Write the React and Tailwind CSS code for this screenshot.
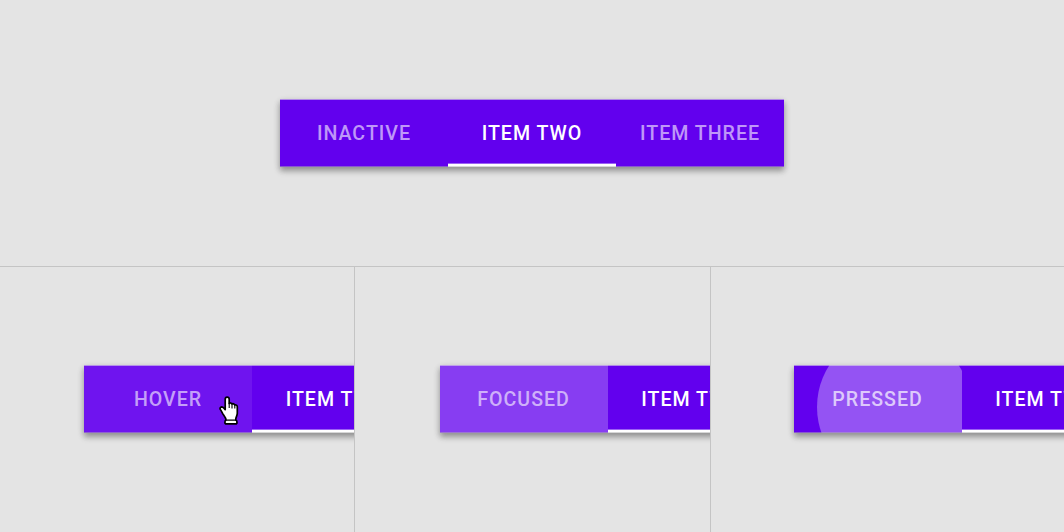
import React from "react";

const Tab = ({ label, active, overlay = "", tone = "text-white/60", children }) => (
  <div
    className={`relative flex h-[68px] w-[168px] shrink-0 items-center justify-center overflow-hidden pt-0.5 ${overlay}`}
  >
    {children}
    <span
      className={`relative text-[19.6px] leading-none font-medium tracking-[1px] whitespace-nowrap ${
        active ? "text-white" : tone
      }`}
    >
      {label}
    </span>
    {active && (
      <span className="absolute inset-x-0 bottom-0 h-1 border-t border-[#9c62f4] bg-white" />
    )}
  </div>
);

const TabBar = ({ children }) => (
  <div className="relative flex h-[68px] w-[504px] shrink-0 bg-[#6200ee] shadow-[0_4px_6px_rgba(0,0,0,0.3),0_2px_7px_rgba(0,0,0,0.12)]">
    {children}
    {/* soft top and bottom edges */}
    <span className="absolute inset-x-0 top-0 h-px bg-[#e4e4e4]/60" />
    <span className="absolute inset-x-0 bottom-0 h-px bg-[#b0b0b0]/50" />
  </div>
);

const HandCursor = () => (
  <svg
    className="absolute top-[31px] left-[135px]"
    width="22"
    height="31"
    viewBox="0 0 22 30"
    preserveAspectRatio="none"
    fill="none"
  >
    <path
      d="M8.2 1.2c1.3 0 2 .8 2 2v4c.5-.7 2.4-.6 2.8.6.8-.6 2.4-.3 2.8.9 1.3-.4 2.5.3 2.5 1.6v6.5c0 2-1.3 3.4-1.5 5.4v1.2c1 .3 1.2.9 1.2 1.9s-.6 1.7-1.7 1.7H7.6c-1.1 0-1.7-.7-1.7-1.7 0-1 .2-1.6 1.2-1.9-.2-2.4-1.5-3.8-3-5.8-1-1.4-1.5-3-2.7-4.6-1-1.5.8-3 2.4-2 1 .6 1.5 1.3 2.4 2.2V3.2c0-1.2.7-2 2-2z"
      fill="#fff"
      stroke="#000"
      strokeWidth="1.7"
      strokeLinejoin="round"
    />
    <path
      d="M10.2 6.5v5.2M13 8v4M15.8 9v3.2M7.5 23.4h8.8"
      stroke="#000"
      strokeWidth="1.1"
    />
  </svg>
);

const Ripple = () => (
  <span className="absolute top-[-35px] left-[23.6px] size-[154px] rounded-full bg-[#9453f3]" />
);

const states = [
  {
    label: "HOVER",
    overlay: "bg-[#6f14ef]",
    extra: <HandCursor />,
    panel: "w-[355px] border-r pl-[84px]",
  },
  {
    label: "FOCUSED",
    overlay: "bg-[#873df2]",
    panel: "w-[356px] border-r pl-[84.6px]",
  },
  {
    label: "PRESSED",
    extra: <Ripple />,
    tone: "text-white/70",
    panel: "w-[353px] pl-[82.6px]",
  },
];

const App = () => {
  return (
    <div className="flex h-[532px] w-[1064px] flex-col overflow-hidden bg-[#e4e4e4] font-[Roboto,sans-serif]">
      <div className="flex h-[267px] shrink-0 justify-center border-b border-[#c4c4c4] pt-[99px]">
        <TabBar>
          <Tab label="INACTIVE" />
          <Tab label="ITEM TWO" active />
          <Tab label="ITEM THREE" />
        </TabBar>
      </div>

      <div className="flex h-[265px]">
        {states.map(({ label, overlay, tone, extra, panel }) => (
          <div
            key={label}
            className={`flex shrink-0 overflow-hidden border-[#c4c4c4] pt-[98px] ${panel}`}
          >
            <TabBar>
              <Tab label={label} overlay={overlay} tone={tone}>
                {extra}
              </Tab>
              <Tab label="ITEM TWO" active />
            </TabBar>
          </div>
        ))}
      </div>
    </div>
  );
};

export default App;
